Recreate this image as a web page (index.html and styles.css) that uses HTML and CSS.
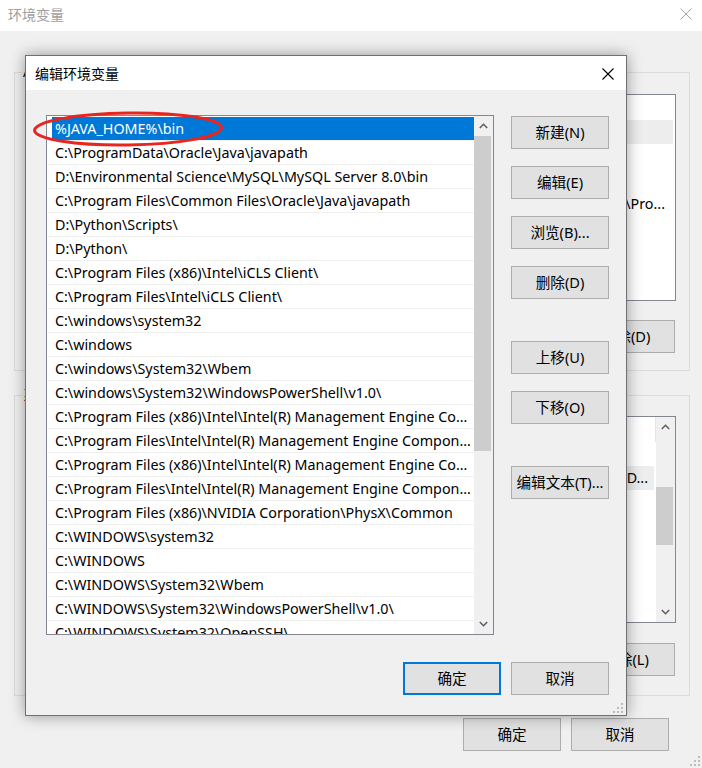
FILE: index.html
```html
<!DOCTYPE html>
<html lang="zh-CN">
<head>
<meta charset="utf-8">
<title>编辑环境变量</title>
<link rel="stylesheet" href="styles.css">
</head>
<body>
<div class="window">
  <div class="win-title">
    <span>环境变量</span>
    <svg class="x-icon" width="12" height="12" viewBox="0 0 12 12"><path d="M0.5 0.5L11.5 11.5M11.5 0.5L0.5 11.5" stroke="#a6a6a6" stroke-width="1" fill="none"/></svg>
  </div>
  <div class="win-body">
    <section class="group g1">
      <span class="legend">Administrator 的用户变量(U)</span>
      <div class="bg-list">
        <div class="bg-rows">
          <div class="bg-head"></div>
          <div class="bg-row bg-sel"></div>
          <div class="bg-row"></div>
          <div class="bg-row"></div>
          <div class="bg-row val-end"><span>C:\Users\Administrator\AppData\Local\Microsoft\WindowsApps;C:\Pro...</span></div>
        </div>
      </div>
      <div class="bg-btns">
        <button class="btn">新建(N)...</button>
        <button class="btn">编辑(E)...</button>
        <button class="btn">删除(D)</button>
      </div>
    </section>
    <section class="group g2">
      <span class="legend">系统变量(S)</span>
      <div class="bg-list">
        <div class="bg-rows">
          <div class="bg-head bg-head-div"></div>
          <div class="bg-row"></div>
          <div class="bg-row bg-sel val-end2"><span>C:\Program Files\Java\jdk1.8.0_201;D...</span></div>
        </div>
        <div class="bg-scroll">
          <div class="arrow"><svg width="9" height="6" viewBox="0 0 9 6"><path d="M0.8 5L4.5 1.3L8.2 5" stroke="#606060" stroke-width="1.6" fill="none"/></svg></div>
          <div class="bg-thumb"></div>
          <div class="spacer"></div>
          <div class="arrow"><svg width="9" height="6" viewBox="0 0 9 6"><path d="M0.8 1L4.5 4.7L8.2 1" stroke="#606060" stroke-width="1.6" fill="none"/></svg></div>
        </div>
      </div>
      <div class="bg-btns">
        <button class="btn">新建(W)...</button>
        <button class="btn">编辑(I)...</button>
        <button class="btn">删除(L)</button>
      </div>
    </section>
  </div>
  <div class="win-foot">
    <button class="btn">确定</button>
    <button class="btn">取消</button>
  </div>
  <svg class="grip win-grip" width="11" height="11" viewBox="0 0 11 11"><g fill="#bdbdbd"><rect x="8" y="0" width="2" height="2"/><rect x="4" y="4" width="2" height="2"/><rect x="8" y="4" width="2" height="2"/><rect x="0" y="8" width="2" height="2"/><rect x="4" y="8" width="2" height="2"/><rect x="8" y="8" width="2" height="2"/></g></svg>
</div>

<div class="dialog">
  <div class="dlg-title">
    <span>编辑环境变量</span>
    <svg class="x-icon" width="12" height="12" viewBox="0 0 12 12"><path d="M0.5 0.5L11.5 11.5M11.5 0.5L0.5 11.5" stroke="#000" stroke-width="1.1" fill="none"/></svg>
  </div>
  <div class="dlg-body">
    <div class="path-list">
      <div class="rows">
        <div class="row sel"><span class="label">%JAVA_HOME%\bin</span></div>
        <div class="row"><span class="label">C:\ProgramData\Oracle\Java\javapath</span></div>
        <div class="row"><span class="label">D:\Environmental Science\MySQL\MySQL Server 8.0\bin</span></div>
        <div class="row"><span class="label">C:\Program Files\Common Files\Oracle\Java\javapath</span></div>
        <div class="row"><span class="label">D:\Python\Scripts\</span></div>
        <div class="row"><span class="label">D:\Python\</span></div>
        <div class="row"><span class="label">C:\Program Files (x86)\Intel\iCLS Client\</span></div>
        <div class="row"><span class="label">C:\Program Files\Intel\iCLS Client\</span></div>
        <div class="row"><span class="label">C:\windows\system32</span></div>
        <div class="row"><span class="label">C:\windows</span></div>
        <div class="row"><span class="label">C:\windows\System32\Wbem</span></div>
        <div class="row"><span class="label">C:\windows\System32\WindowsPowerShell\v1.0\</span></div>
        <div class="row"><span class="label">C:\Program Files (x86)\Intel\Intel(R) Management Engine Components\DAL</span></div>
        <div class="row"><span class="label">C:\Program Files\Intel\Intel(R) Management Engine Components\DAL</span></div>
        <div class="row"><span class="label">C:\Program Files (x86)\Intel\Intel(R) Management Engine Components\IPT</span></div>
        <div class="row"><span class="label">C:\Program Files\Intel\Intel(R) Management Engine Components\IPT</span></div>
        <div class="row"><span class="label">C:\Program Files (x86)\NVIDIA Corporation\PhysX\Common</span></div>
        <div class="row"><span class="label">C:\WINDOWS\system32</span></div>
        <div class="row"><span class="label">C:\WINDOWS</span></div>
        <div class="row"><span class="label">C:\WINDOWS\System32\Wbem</span></div>
        <div class="row"><span class="label">C:\WINDOWS\System32\WindowsPowerShell\v1.0\</span></div>
        <div class="row"><span class="label">C:\WINDOWS\System32\OpenSSH\</span></div>
      </div>
      <div class="scroll">
        <div class="arrow"><svg width="9" height="6" viewBox="0 0 9 6"><path d="M0.8 5L4.5 1.3L8.2 5" stroke="#606060" stroke-width="1.6" fill="none"/></svg></div>
        <div class="thumb"></div>
        <div class="spacer"></div>
        <div class="arrow"><svg width="9" height="6" viewBox="0 0 9 6"><path d="M0.8 1L4.5 4.7L8.2 1" stroke="#606060" stroke-width="1.6" fill="none"/></svg></div>
      </div>
    </div>
    <div class="side">
      <button class="btn">新建(N)</button>
      <button class="btn">编辑(E)</button>
      <button class="btn">浏览(B)...</button>
      <button class="btn">删除(D)</button>
      <button class="btn sep">上移(U)</button>
      <button class="btn">下移(O)</button>
      <button class="btn sep">编辑文本(T)...</button>
    </div>
    <div class="dlg-foot">
      <button class="btn default">确定</button>
      <button class="btn">取消</button>
    </div>
  </div>
  <svg class="grip dlg-grip" width="11" height="11" viewBox="0 0 11 11"><g fill="#bdbdbd"><rect x="8" y="0" width="2" height="2"/><rect x="4" y="4" width="2" height="2"/><rect x="8" y="4" width="2" height="2"/><rect x="0" y="8" width="2" height="2"/><rect x="4" y="8" width="2" height="2"/><rect x="8" y="8" width="2" height="2"/></g></svg>
</div>

<svg class="mark" width="194" height="40" viewBox="0 0 194 40"><ellipse cx="96" cy="19" rx="93.5" ry="16" transform="rotate(-0.8 96 19)" fill="none" stroke="#e8251f" stroke-width="3"/></svg>
</body>
</html>
```

FILE: styles.css
```css
* {
  box-sizing: border-box;
  margin: 0;
  padding: 0;
}

html,
body {
  width: 702px;
  height: 768px;
  overflow: hidden;
}

body {
  position: relative;
  background: #f0f0f0;
  font-family: "Noto Sans", "Noto Sans CJK SC", sans-serif;
  font-size: 14.3px;
  color: #000;
}

.btn {
  appearance: none;
  display: flex;
  align-items: center;
  justify-content: center;
  width: 98px;
  height: 33px;
  background: #e1e1e1;
  border: 1px solid #adadad;
  font-family: inherit;
  font-size: 14.6px;
  line-height: 20px;
  color: #000;
  padding: 0 0 1px;
}

.btn.default {
  border: 2px solid #0078d7;
}

/* ---------- background window ---------- */
.window {
  position: relative;
  width: 702px;
  height: 768px;
  display: flex;
  flex-direction: column;
  background: #f0f0f0;
}

.win-title {
  height: 31px;
  background: #fff;
  display: flex;
  align-items: center;
  justify-content: space-between;
  padding: 0 10px 4px 8px;
  color: #a0a0a0;
  font-size: 14px;
}

.win-body {
  padding: 41px 12px 0 14px;
}

.group {
  position: relative;
  width: 676px;
  border: 1px solid #dcdcdc;
  padding: 21px 13px 17px;
}

.g2 {
  margin-top: 24px;
  padding-top: 20px;
  padding-bottom: 19px;
}

.legend {
  position: absolute;
  left: 7px;
  top: -11px;
  padding: 0 1px;
  background: #f0f0f0;
  font-size: 14px;
  line-height: 20px;
}

.bg-list {
  height: 207px;
  border: 1px solid #828790;
  background: #fff;
  display: flex;
}

.bg-rows {
  flex: 1;
  min-width: 0;
  overflow: hidden;
}

.bg-head {
  height: 25px;
}

.bg-head-div {
  border-right: 1px solid #e5e5e5;
}

.bg-row {
  height: 24px;
  display: flex;
  align-items: center;
  overflow: hidden;
  white-space: nowrap;
  line-height: 22px;
}

.bg-row span {
  flex-shrink: 0;
}

.bg-sel {
  background: #ededed;
  margin-right: 2px;
}

.val-end {
  justify-content: flex-end;
  padding-right: 10px;
}

.val-end2 {
  justify-content: flex-end;
  padding-right: 6px;
}

.bg-scroll {
  width: 19px;
  background: #f0f0f0;
  display: flex;
  flex-direction: column;
}

.bg-thumb {
  margin-top: 50px;
  height: 58px;
  width: 17px;
  background: #cdcdcd;
}

.bg-btns {
  display: flex;
  justify-content: flex-end;
  gap: 10px;
  margin-top: 19px;
  margin-right: 1px;
}

.g2 .bg-btns {
  margin-top: 20px;
}

.win-foot {
  display: flex;
  justify-content: flex-end;
  gap: 10px;
  margin-top: 22px;
  padding-right: 33px;
}

.grip {
  position: absolute;
}

.win-grip {
  right: 1px;
  bottom: 1px;
}

/* ---------- foreground dialog ---------- */
.dialog {
  position: absolute;
  left: 25px;
  top: 55px;
  width: 602px;
  height: 661px;
  border: 1px solid #707070;
  background: #f0f0f0;
  box-shadow: 0 0 14px rgba(0, 0, 0, 0.38);
  display: flex;
  flex-direction: column;
}

.dlg-title {
  height: 34px;
  background: #fff;
  display: flex;
  align-items: center;
  justify-content: space-between;
  padding: 0 12px 0 9px;
  font-size: 14px;
}

.dlg-title .x-icon {
  margin-top: 1px;
}

.dlg-body {
  flex: 1;
  display: grid;
  grid-template-columns: 448px 98px;
  grid-template-rows: 520px auto;
  column-gap: 17px;
  padding: 25px 17px 20px 20px;
}

.path-list {
  border: 1px solid #828790;
  background: #fff;
  display: flex;
  height: 520px;
}

.rows {
  flex: 1;
  min-width: 0;
  padding-top: 1px;
  overflow: hidden;
}

.row {
  height: 24px;
  margin-left: 1px;
  padding-left: 4px;
  border-bottom: 1px solid #f0f0f0;
  display: flex;
}

.label {
  flex: 1;
  min-width: 0;
  padding: 1px 3px 0;
  line-height: 22px;
  white-space: nowrap;
  overflow: hidden;
  text-overflow: ellipsis;
}

.row.sel .label {
  background: #0078d7;
  color: #fff;
}

.scroll {
  width: 19px;
  background: #f0f0f0;
  display: flex;
  flex-direction: column;
}

.arrow {
  height: 20px;
  display: flex;
  align-items: center;
  justify-content: center;
}

.thumb {
  height: 315px;
  width: 17px;
  background: #cdcdcd;
}

.spacer {
  flex: 1;
}

.side {
  display: flex;
  flex-direction: column;
  gap: 17px;
  padding-top: 1px;
}

.side .sep {
  margin-top: 25px;
}

.dlg-foot {
  grid-column: 1 / -1;
  display: flex;
  justify-content: flex-end;
  gap: 10px;
  margin-top: 27px;
}

.dlg-grip {
  right: 2px;
  bottom: 1px;
}

.mark {
  position: absolute;
  left: 32px;
  top: 110px;
}
```
